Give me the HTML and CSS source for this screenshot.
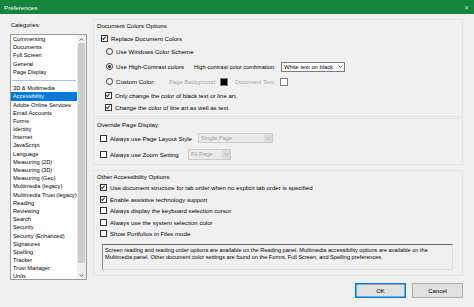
FILE: index.html
```html
<!DOCTYPE html>
<html lang="en">
<head>
    <meta charset="UTF-8">
    <meta name="viewport" content="width=device-width, initial-scale=1.0">
    <title>Preferences</title>
    <link rel="stylesheet" href="styles.css">
</head>
<body>
    <div class="titlebar">
        <span class="title">Preferences</span>
        <span class="close">&#x2715;</span>
    </div>

    <div class="content">
        <div class="sidebar">
            <div class="cat-label">Categories:</div>
            <div class="listbox">
                <ul class="cat-list">
                    <li>Commenting</li>
                    <li>Documents</li>
                    <li>Full Screen</li>
                    <li>General</li>
                    <li>Page Display</li>
                    <li class="sep"></li>
                    <li>3D &amp; Multimedia</li>
                    <li class="active">Accessibility</li>
                    <li>Adobe Online Services</li>
                    <li>Email Accounts</li>
                    <li>Forms</li>
                    <li>Identity</li>
                    <li>Internet</li>
                    <li>JavaScript</li>
                    <li>Language</li>
                    <li>Measuring (2D)</li>
                    <li>Measuring (3D)</li>
                    <li>Measuring (Geo)</li>
                    <li>Multimedia (legacy)</li>
                    <li>Multimedia Trust (legacy)</li>
                    <li>Reading</li>
                    <li>Reviewing</li>
                    <li>Search</li>
                    <li>Security</li>
                    <li>Security (Enhanced)</li>
                    <li>Signatures</li>
                    <li>Spelling</li>
                    <li>Tracker</li>
                    <li>Trust Manager</li>
                    <li>Units</li>
                </ul>
                <div class="scrollbar">
                    <span class="sb-arrow">
                        <svg width="5" height="3" viewBox="0 0 5 3"><path d="M0.5 2.5L2.5 0.7L4.5 2.5" fill="none" stroke="#606060" stroke-width="0.9"/></svg>
                    </span>
                    <div class="sb-thumb"></div>
                    <div class="sb-track"></div>
                    <span class="sb-arrow">
                        <svg width="5" height="3" viewBox="0 0 5 3"><path d="M0.5 0.5L2.5 2.3L4.5 0.5" fill="none" stroke="#606060" stroke-width="0.9"/></svg>
                    </span>
                </div>
            </div>
        </div>

        <div class="panel">
            <section class="group g-colors">
                <div class="group-title">Document Colors Options</div>
                <div class="row row-main">
                    <span class="cb on"></span>
                    <span>Replace Document Colors</span>
                </div>
                <div class="row row-radio">
                    <span class="rb"></span>
                    <span>Use Windows Color Scheme</span>
                </div>
                <div class="row row-radio">
                    <span class="rb on"></span>
                    <span class="lbl w-contrast">Use High-Contrast colors</span>
                    <span class="lbl w-combo">High-contrast color combination:</span>
                    <span class="select sel-combo">
                        <span class="sel-text">White text on black</span>
                        <span class="sel-arrow">
                            <svg width="5" height="3" viewBox="0 0 5 3"><path d="M0.5 0.5L2.5 2.3L4.5 0.5" fill="none" stroke="#444" stroke-width="0.8"/></svg>
                        </span>
                    </span>
                </div>
                <div class="row row-radio">
                    <span class="rb"></span>
                    <span class="lbl w-custom">Custom Color:</span>
                    <span class="lbl w-bg muted">Page Background:</span>
                    <span class="swatch black"></span>
                    <span class="lbl w-doctext muted">Document Text:</span>
                    <span class="swatch white"></span>
                </div>
                <div class="row row-sub">
                    <span class="cb on"></span>
                    <span>Only change the color of black text or line art.</span>
                </div>
                <div class="row row-sub">
                    <span class="cb on"></span>
                    <span>Change the color of line art as well as text.</span>
                </div>
            </section>

            <section class="group g-page">
                <div class="group-title">Override Page Display</div>
                <div class="row row-page">
                    <span class="cb"></span>
                    <span class="lbl w-layout">Always use Page Layout Style</span>
                    <span class="select disabled sel-layout">
                        <span class="sel-text">Single Page</span>
                        <span class="sel-arrow">
                            <svg width="5" height="3" viewBox="0 0 5 3"><path d="M0.5 0.5L2.5 2.3L4.5 0.5" fill="none" stroke="#a0a0a0" stroke-width="0.8"/></svg>
                        </span>
                    </span>
                </div>
                <div class="row row-page">
                    <span class="cb"></span>
                    <span class="lbl w-zoom">Always use Zoom Setting</span>
                    <span class="select disabled sel-zoom">
                        <span class="sel-text">Fit Page</span>
                        <span class="sel-arrow">
                            <svg width="5" height="3" viewBox="0 0 5 3"><path d="M0.5 0.5L2.5 2.3L4.5 0.5" fill="none" stroke="#a0a0a0" stroke-width="0.8"/></svg>
                        </span>
                    </span>
                </div>
            </section>

            <section class="group g-other">
                <div class="group-title">Other Accessibility Options</div>
                <div class="row row-other">
                    <span class="cb on"></span>
                    <span>Use document structure for tab order when no explicit tab order is specified</span>
                </div>
                <div class="row row-other">
                    <span class="cb on"></span>
                    <span>Enable assistive technology support</span>
                </div>
                <div class="row row-other">
                    <span class="cb"></span>
                    <span>Always display the keyboard selection cursor</span>
                </div>
                <div class="row row-other">
                    <span class="cb"></span>
                    <span>Always use the system selection color</span>
                </div>
                <div class="row row-other">
                    <span class="cb"></span>
                    <span>Show Portfolios in Files mode</span>
                </div>
                <div class="info">
                    Screen reading and reading order options are available on the Reading panel. Multimedia accessibility options are available on the Multimedia panel. Other document color settings are found on the Forms, Full Screen, and Spelling preferences.
                </div>
            </section>
        </div>
    </div>

    <div class="buttons">
        <button class="btn default">OK</button>
        <button class="btn">Cancel</button>
    </div>
</body>
</html>
```

FILE: styles.css
```css
body {
    margin: 0;
    width: 474px;
    height: 307px;
    overflow: hidden;
    background-color: #f0f0f0;
    font-family: "Liberation Sans", Arial, sans-serif;
    font-size: 6.1px;
    color: #000;
}

/* Window title */
.titlebar {
    height: 14px;
    background-color: #15843c;
    color: #fff;
    display: flex;
    align-items: center;
    justify-content: space-between;
    padding: 0 5px 0 4px;
}
.title {
    font-size: 6.2px;
}
.close {
    font-size: 6px;
    color: #c8ecd2;
}

/* Main area */
.content {
    display: flex;
    gap: 6px;
    height: 266px;
    box-sizing: border-box;
    padding: 5px 11px 0 10px;
}

/* Categories list */
.sidebar {
    width: 77px;
    display: flex;
    flex-direction: column;
    font-size: 5.7px;
}
.cat-label {
    height: 12px;
    line-height: 12px;
    margin-bottom: 3px;
    padding-left: 1px;
}
.listbox {
    flex: 1;
    display: flex;
    background-color: #fff;
    border: 1px solid #9a9a9a;
    overflow: hidden;
}
.cat-list {
    list-style: none;
    margin: 0;
    padding: 0;
    flex: 1;
    min-width: 0;
}
.cat-list li {
    height: 8.2px;
    line-height: 8.2px;
    padding-left: 2px;
    white-space: nowrap;
}
.cat-list li.active {
    background-color: #0078d7;
    color: #fff;
}
.cat-list li.sep {
    display: flex;
    align-items: center;
    padding: 0 1px;
}
.cat-list li.sep::before {
    content: "";
    flex: 1;
    border-top: 1px solid #a9c1dc;
}
.scrollbar {
    width: 9px;
    display: flex;
    flex-direction: column;
    background-color: #f0f0f0;
}
.sb-arrow {
    height: 8px;
    display: flex;
    align-items: center;
    justify-content: center;
}
.sb-thumb {
    height: 220px;
    margin: 0 1px;
    background-color: #cdcdcd;
}
.sb-track {
    flex: 1;
}

/* Options panel */
.panel {
    width: 370px;
    display: flex;
    flex-direction: column;
}
.group {
    box-sizing: border-box;
    border: 1px solid #e4e4e4;
    padding-left: 2px;
}
.g-colors {
    height: 98px;
}
.g-page {
    height: 47px;
    margin-top: 1px;
}
.g-other {
    height: 106px;
    margin-top: 5px;
}
.group-title {
    height: 11px;
    line-height: 11px;
    padding-left: 1px;
}
.row {
    display: flex;
    align-items: center;
    white-space: nowrap;
}
.row .cb, .row .rb {
    margin-right: 3px;
}
.row-main {
    height: 12px;
    margin-left: 5px;
    margin-top: 1px;
}
.row-radio {
    height: 15px;
    margin-left: 10px;
}
.row-sub {
    height: 12px;
    margin-left: 9px;
}
.row-page {
    height: 16px;
    margin-left: 4px;
}
.row-page:first-of-type {
    margin-top: 1px;
}
.row-other {
    height: 11.5px;
    margin-left: 4px;
}

/* Fixed label columns */
.lbl {
    flex: none;
}
.w-contrast { width: 78px; }
.w-combo { width: 87px; font-size: 5.7px; }
.w-custom { width: 53px; }
.w-bg { width: 51px; font-size: 5.8px; }
.w-doctext { width: 45px; margin-left: 7px; font-size: 5.8px; }
.w-layout { width: 88px; }
.w-zoom { width: 78px; }
.muted {
    color: #a6a6a6;
}

/* Controls */
.cb {
    flex: none;
    position: relative;
    width: 5px;
    height: 5px;
    border: 1px solid #333;
    background-color: #fff;
}
.cb.on::after {
    content: "";
    position: absolute;
    left: 1.4px;
    top: 0;
    width: 1.3px;
    height: 2.8px;
    border: solid #222;
    border-width: 0 0.9px 0.9px 0;
    transform: rotate(40deg);
}
.rb {
    flex: none;
    position: relative;
    width: 5px;
    height: 5px;
    border: 1px solid #333;
    border-radius: 50%;
    background-color: #fff;
}
.rb.on::after {
    content: "";
    position: absolute;
    left: 1px;
    top: 1px;
    width: 3px;
    height: 3px;
    border-radius: 50%;
    background-color: #222;
}
.swatch {
    flex: none;
    width: 6px;
    height: 6px;
    border: 1px solid #7a7a7a;
}
.swatch.black {
    background-color: #000;
}
.swatch.white {
    background-color: #fff;
}
.select {
    flex: none;
    display: flex;
    align-items: center;
    box-sizing: border-box;
    height: 10px;
    border: 1px solid #7a7a7a;
    background-color: #fff;
    font-size: 5.8px;
}
.sel-text {
    flex: 1;
    padding-left: 2px;
}
.sel-arrow {
    width: 8px;
    align-self: stretch;
    display: flex;
    align-items: center;
    justify-content: center;
}
.sel-combo {
    width: 64px;
}
.select.disabled {
    border-color: #cccccc;
    background-color: #eaeaea;
    color: #a0a0a0;
}
.select.disabled .sel-arrow {
    background-color: #dcdcdc;
}
.sel-layout {
    width: 75px;
}
.sel-zoom {
    width: 43px;
    height: 11px;
}
.info {
    box-sizing: border-box;
    width: 351px;
    height: 26px;
    margin: 4.5px 0 0 6px;
    padding: 2px 2px;
    font-size: 5.6px;
    line-height: 7px;
    border: 1px solid;
    border-color: #6d6d6d #dcdcdc #dcdcdc #8a8a8a;
    border-top-width: 1.5px;
}

/* Dialog buttons */
.buttons {
    display: flex;
    justify-content: flex-end;
    gap: 6px;
    padding: 3px 11px 0 0;
}
.btn {
    width: 51px;
    height: 15px;
    padding: 0;
    font-family: inherit;
    font-size: 6px;
    color: #000;
    background-color: #e1e1e1;
    border: 1px solid #adadad;
}
.btn.default {
    border-color: #0078d7;
    box-shadow: inset 0 0 0 0.5px #0078d7;
}
```
